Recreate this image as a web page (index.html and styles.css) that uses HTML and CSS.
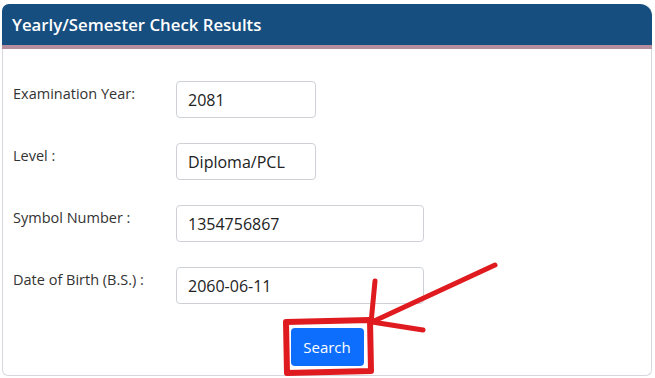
FILE: index.html
```html
<!DOCTYPE html>
<html lang="en">
<head>
  <meta charset="UTF-8">
  <title>Yearly/Semester Check Results</title>
  <link rel="stylesheet" href="styles.css">
</head>
<body>
  <div class="wrap">
    <div class="card">
      <div class="card-header">Yearly/Semester Check Results</div>
      <form class="card-body">
        <div class="row">
          <label class="label">Examination Year:</label>
          <input class="field short" type="text" value="2081">
        </div>
        <div class="row">
          <label class="label">Level :</label>
          <input class="field short" type="text" value="Diploma/PCL">
        </div>
        <div class="row">
          <label class="label">Symbol Number :</label>
          <input class="field" type="text" value="1354756867">
        </div>
        <div class="row">
          <label class="label">Date of Birth (B.S.) :</label>
          <input class="field" type="text" value="2060-06-11">
        </div>
        <div class="actions">
          <button class="btn" type="button">Search</button>
        </div>
      </form>
    </div>

    <!-- red hand drawn marker over the button -->
    <svg class="marker" width="655" height="378" viewBox="0 0 655 378">
      <g fill="none" stroke="#e01b1f" stroke-linecap="round" stroke-linejoin="round">
        <path d="M286 322 L370 320 L371 371 L287 373 Z" stroke-width="6"/>
        <path d="M375 281 L371 323" stroke-width="5"/>
        <path d="M495 265 L372 322 L423 330" stroke-width="5"/>
      </g>
    </svg>
  </div>
</body>
</html>
```

FILE: styles.css
```css
body {
  margin: 0;
  background-color: #fff;
  font-family: 'Open Sans', 'Noto Sans', sans-serif;
  color: #333;
}

.wrap {
  position: relative;
  padding: 4px 3px 0 2px;
}

.card {
  border: 1px solid #d6d8de;
  border-top: none;
  border-radius: 8px 10px 6px 6px;
  height: 372px;
  box-sizing: border-box;
}

.card-header {
  background-color: #164e7f;
  color: #fff;
  font-size: 16.8px;
  font-weight: 600;
  padding: 10px 10px 9px;
  border-radius: 7px 12px 0 0;
  border-bottom: 4px solid #b58d9c;
  margin: 0 -1px;
  line-height: 22px;
}

.card-body {
  padding: 32px 10px 0;
}

.row {
  display: flex;
  align-items: flex-start;
  margin-bottom: 25px;
}

.label {
  width: 163px;
  font-size: 14.5px;
  line-height: 20px;
  padding-top: 3px;
}

.field {
  box-sizing: border-box;
  width: 248px;
  height: 37px;
  border: 1px solid #ced1d6;
  border-radius: 4px;
  padding: 0 11px;
  font-family: 'Open Sans', 'Noto Sans', sans-serif;
  font-size: 16px;
  color: #222;
}

.field.short {
  width: 140px;
}

.actions {
  display: flex;
  justify-content: center;
  margin-top: -1px;
}

.btn {
  background-color: #0d6efd;
  color: #fff;
  border: none;
  border-radius: 4px;
  width: 73px;
  height: 38px;
  font-family: 'Open Sans', 'Noto Sans', sans-serif;
  font-size: 15px;
}

.marker {
  position: absolute;
  left: 0;
  top: 0;
  pointer-events: none;
}
```
